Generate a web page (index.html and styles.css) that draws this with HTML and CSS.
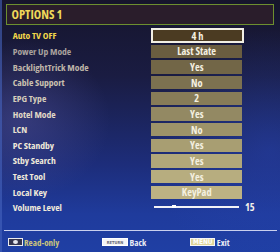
FILE: index.html
```html
<!DOCTYPE html>
<html>
<head>
<meta charset="utf-8">
<link rel="stylesheet" href="styles.css">
</head>
<body>
<div class="screen">
  <div class="title">OPTIONS 1</div>
  <div class="list">
    <div class="row active"><span class="label">Auto TV OFF</span><span class="value sel">4 h</span></div>
    <div class="row"><span class="label l1">Power Up Mode</span><span class="value v1">Last State</span></div>
    <div class="row"><span class="label l2">BacklightTrick Mode</span><span class="value v2">Yes</span></div>
    <div class="row"><span class="label l3">Cable Support</span><span class="value v3">No</span></div>
    <div class="row"><span class="label l4">EPG Type</span><span class="value v4">2</span></div>
    <div class="row"><span class="label l5">Hotel Mode</span><span class="value v5">Yes</span></div>
    <div class="row"><span class="label l6">LCN</span><span class="value v6">No</span></div>
    <div class="row"><span class="label l7">PC Standby</span><span class="value v7">Yes</span></div>
    <div class="row"><span class="label l7">Stby Search</span><span class="value v8">Yes</span></div>
    <div class="row"><span class="label l7">Test Tool</span><span class="value v9">Yes</span></div>
    <div class="row"><span class="label l7">Local Key</span><span class="value v10">KeyPad</span></div>
    <div class="row"><span class="label l7">Volume Level</span><span class="slider"><span class="track"></span><span class="knob"></span></span><span class="num">15</span></div>
  </div>
  <div class="sep"></div>
  <div class="footer">
    <div class="fitem"><span class="ico ico-ro"><span class="dot"></span></span><span class="ftext ro">Read-only</span></div>
    <div class="fitem"><span class="ico ico-back">RETURN</span><span class="ftext">Back</span></div>
    <div class="fitem"><span class="ico ico-menu">MENU</span><span class="ftext">Exit</span></div>
  </div>
</div>
</body>
</html>
```
FILE: styles.css
```css
html, body {
  margin: 0;
  padding: 0;
}
body {
  width: 280px;
  height: 252px;
  overflow: hidden;
  font-family: "Open Sans", "DejaVu Sans Condensed", sans-serif;
  font-stretch: condensed;
  font-weight: bold;
  background:
    radial-gradient(ellipse 90px 80px at 20px 120px, rgba(80, 80, 150, 0.5), rgba(80, 80, 150, 0) 100%),
    radial-gradient(ellipse 120px 120px at 270px 150px, rgba(40, 70, 180, 0.45), rgba(40, 70, 180, 0) 100%),
    linear-gradient(180deg, #16152c 0%, #1a1c42 30%, #1d2d7a 65%, #1f3b9c 85%, #1f3fa4 100%);
}
.screen {
  height: 252px;
  box-sizing: border-box;
  padding: 4px 6px 0 4px;
  display: flex;
  flex-direction: column;
  border-left: 2px solid rgba(70, 100, 190, 0.6);
}
.title {
  height: 21px;
  box-sizing: border-box;
  border: 1.5px solid #6d8f2f;
  background: #2a1d2b;
  padding-left: 4.5px;
  display: flex;
  align-items: center;
  color: #efd85a;
  font-size: 12.5px;
}
.list {
  margin-top: 2.9px;
  padding-left: 6.7px;
}
.row {
  display: grid;
  grid-template-columns: 138.3px 91.5px auto;
  height: 15.67px;
  align-items: center;
  font-size: 9.6px;
}
.label {
  color: #e6dcc8;
  white-space: nowrap;
}
.active .label { color: #f2d64a; }
.l1 { color: #a9a19e; }
.l2 { color: #bfb5a8; }
.l3 { color: #cbc1b0; }
.l4 { color: #d6cdbb; }
.l5 { color: #e0d8c6; }
.l6 { color: #e8e1d0; }
.l7 { color: #efe9da; }
.value {
  height: 13.5px;
  display: flex;
  align-items: center;
  justify-content: center;
  color: #f4f0e0;
  background: #8a7f5a;
  font-size: 10.4px;
}
.value.sel {
  height: 15px;
  box-sizing: border-box;
  border: 2px solid #f2efe4;
  background: #4b3b22;
  margin-left: -0.2px;
  margin-right: -1.5px;
}
.v1 { background: #6a5d40; }
.v2 { background: #726647; }
.v3 { background: #7c7150; }
.v4 { background: #877c58; }
.v5 { background: #938963; }
.v6 { background: #9d9369; }
.v7 { background: #a89e72; }
.v8 { background: #b1a77a; }
.v9 { background: #b7ad7f; }
.v10 { background: #bdb283; }
.slider {
  position: relative;
  height: 15px;
  margin: 0 3.5px 0 3px;
}
.track {
  position: absolute;
  left: 0;
  right: 0;
  top: 5.5px;
  height: 1.6px;
  background: #f2f2f6;
}
.knob {
  position: absolute;
  left: 18px;
  top: 4.4px;
  width: 3.6px;
  height: 3.6px;
  background: #ffffff;
}
.num {
  color: #f2f0ea;
  padding-left: 2.5px;
  margin-top: -1.5px;
  font-size: 10.4px;
}
.sep {
  margin: 14px -3px 0 -2px;
  height: 1.3px;
  background: #c9d0ee;
}
.footer {
  display: grid;
  grid-template-columns: 94px 88.3px auto;
  padding-top: 7px;
  font-size: 9px;
  margin-left: 2px;
}
.fitem {
  display: flex;
  align-items: center;
  height: 8px;
}
.ico {
  box-sizing: border-box;
  height: 8px;
  display: flex;
  align-items: center;
  justify-content: center;
  font-family: "DejaVu Sans Condensed", sans-serif;
}
.ico-ro {
  width: 14.5px;
  border: 1.5px solid #ececf0;
  background: #34344e;
}
.dot {
  width: 5px;
  height: 4px;
  border-radius: 50%;
  background: #e8e8ee;
}
.ico-back {
  width: 26px;
  background: #f4f4f6;
  border: 1px solid #ffffff;
  color: #6b6b78;
  font-size: 4px;
}
.ico-menu {
  width: 25px;
  background: #ddd59a;
  border: 1px solid #f6f6f6;
  color: #ffffff;
  font-size: 6.5px;
}
.ftext {
  color: #e9ebf4;
  padding-left: 1.5px;
}
.ftext.ro {
  color: #cbc37c;
}
```
